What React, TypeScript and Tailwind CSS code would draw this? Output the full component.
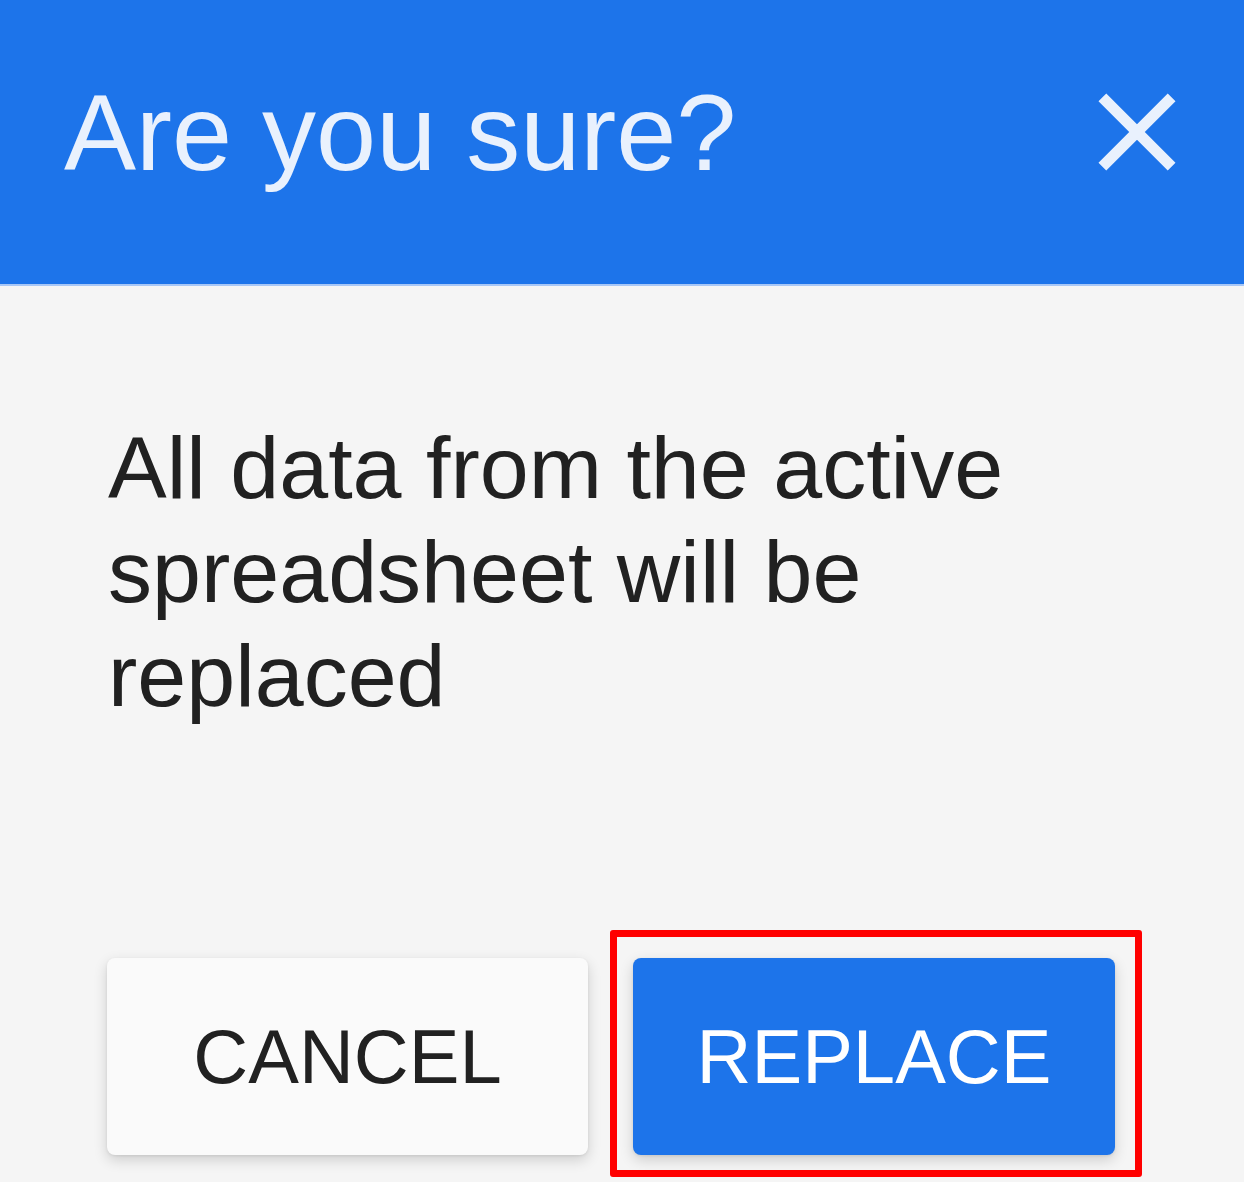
import React from "react";

export default function App() {
  return (
    <div
      className="w-[1244px] h-[1182px] bg-[#f5f5f5] flex flex-col overflow-hidden"
      style={{ fontFamily: '"Liberation Sans", Arial, sans-serif' }}
    >
      <div className="h-[286px] shrink-0 bg-[#1d74ea] border-b-2 border-[#a8c7f6] flex items-start justify-between pl-[64px] pr-[41px]">
        <h1 className="mt-[79px] text-[108px] leading-none font-normal text-[#e9f1fd] tracking-[0px]">
          Are you sure?
        </h1>
        <svg
          className="mt-[66px] w-[132px] h-[132px]"
          viewBox="0 0 24 24"
          fill="#e9f1fd"
        >
          <path d="M19 6.41L17.59 5 12 10.59 6.41 5 5 6.41 10.59 12 5 17.59 6.41 19 12 13.41 17.59 19 19 17.59 13.41 12z" />
        </svg>
      </div>
      <div className="flex flex-col pl-[108px] pr-[108px]">
        <p className="mt-[130px] text-[88px] leading-[104px] text-[#212121]">
          All data from the active spreadsheet will be replaced
        </p>
        <div className="mt-[230px] flex gap-[45px] pl-[-1px]">
          <button className="-ml-[1px] w-[481px] h-[197px] rounded-[8px] bg-[#fafafa] shadow-[0_5px_14px_rgba(0,0,0,0.16),0_1px_3px_rgba(0,0,0,0.08)] text-[76px] leading-none text-[#212121] font-medium">
            CANCEL
          </button>
          <div className="relative">
            <button className="w-[482px] h-[197px] rounded-[8px] bg-[#1d74ea] shadow-[0_5px_14px_rgba(0,0,0,0.16),0_1px_3px_rgba(0,0,0,0.08)] text-[76px] leading-none text-white font-medium">
              REPLACE
            </button>
            <div className="absolute left-[-23px] top-[-28px] right-[-27px] bottom-[-22px] border-[7px] border-[#ff0000] rounded-[3px] pointer-events-none" />
          </div>
        </div>
      </div>
    </div>
  );
}
